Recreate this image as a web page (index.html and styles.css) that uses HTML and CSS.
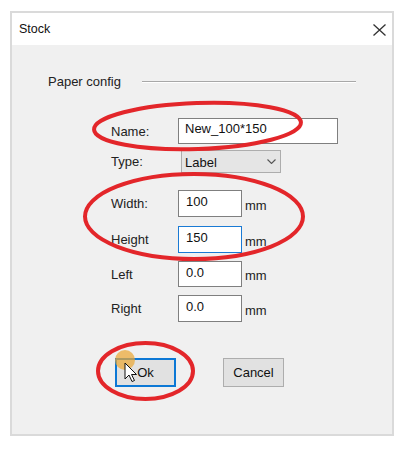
FILE: index.html
```html
<!DOCTYPE html>
<html>
<head>
<meta charset="utf-8">
<link rel="stylesheet" href="styles.css">
</head>
<body>
<div class="page">
  <div class="dialog">
    <div class="titlebar">
      <span class="title">Stock</span>
      <svg class="close" width="13" height="12" viewBox="0 0 13 12"><path d="M0.5 0.5 L12.5 11.5 M12.5 0.5 L0.5 11.5" stroke="#333" stroke-width="1.3" fill="none"/></svg>
    </div>
    <div class="content">
      <div class="group-head">
        <span class="group-title">Paper config</span>
        <span class="group-line"></span>
      </div>
      <div class="form">
        <div class="row row-name">
          <span class="label">Name:</span>
          <span class="field field-name">New_100*150</span>
        </div>
        <div class="row row-type">
          <span class="label">Type:</span>
          <span class="select"><span>Label</span>
            <svg width="9" height="5" viewBox="0 0 9 5"><path d="M0.5 0.5 L4.5 4.5 L8.5 0.5" stroke="#555" stroke-width="1.1" fill="none"/></svg>
          </span>
        </div>
        <div class="row row-width">
          <span class="label">Width:</span>
          <span class="field field-num">100</span>
          <span class="unit">mm</span>
        </div>
        <div class="row row-height">
          <span class="label">Height</span>
          <span class="field field-num field-focus">150</span>
          <span class="unit">mm</span>
        </div>
        <div class="row row-left">
          <span class="label">Left</span>
          <span class="field field-num field-short">0.0</span>
          <span class="unit">mm</span>
        </div>
        <div class="row row-right">
          <span class="label">Right</span>
          <span class="field field-num">0.0</span>
          <span class="unit">mm</span>
        </div>
      </div>
      <div class="buttons">
        <span class="btn btn-ok">Ok</span>
        <span class="btn btn-cancel">Cancel</span>
      </div>
    </div>
  </div>
</div>
<svg class="overlay" width="405" height="450" viewBox="0 0 405 450">
  <ellipse cx="197.5" cy="126" rx="103.5" ry="23" transform="rotate(-2 197.5 126)" class="mark"/>
  <ellipse cx="194" cy="216.5" rx="109" ry="42.5" class="mark"/>
  <ellipse cx="145.5" cy="371" rx="47.5" ry="28" class="mark"/>
  <circle cx="125" cy="360" r="10" fill="rgba(236,168,52,0.72)"/>
  <path d="M125 363 L125 379 L129 375 L132 381.5 L134.5 380.5 L131.5 374.5 L136.5 374.5 Z" fill="#fff" stroke="#111" stroke-width="1" stroke-linejoin="round"/>
</svg>
</body>
</html>
```

FILE: styles.css
```css
html, body {
  margin: 0;
  padding: 0;
  background: #ffffff;
}
body {
  font-family: "Liberation Sans", Arial, sans-serif;
  font-size: 13px;
  color: #222;
  position: relative;
  width: 405px;
  height: 450px;
  overflow: hidden;
}
.page {
  padding: 11px 0 0 10px;
}
.dialog {
  box-sizing: border-box;
  width: 384px;
  height: 425px;
  border: 2px solid #dadada;
  background: #f0f0f0;
  display: flex;
  flex-direction: column;
}
.titlebar {
  height: 32px;
  flex: none;
  background: #ffffff;
  display: flex;
  align-items: center;
  justify-content: space-between;
  padding: 0 6px 0 7px;
}
.title {
  font-size: 12.5px;
  color: #111;
  line-height: 15px;
}
.close {
  display: block;
  margin-top: 1px;
}
.content {
  flex: 1;
}
.group-head {
  display: flex;
  align-items: center;
  height: 16px;
  margin: 29px 0 0 36px;
}
.group-title {
  line-height: 16px;
  color: #222;
}
.group-line {
  width: 214px;
  height: 1px;
  background: #a8a8a8;
  border-bottom: 1px solid #ffffff;
  margin-left: 21px;
}
.form {
  margin: 28px 0 0 99px;
}
.row {
  display: flex;
  align-items: center;
}
.label {
  width: 67px;
  flex: none;
  line-height: 15px;
  color: #222;
}
.row-type { margin-top: 6px; }
.row-width { margin-top: 17px; }
.row-height { margin-top: 9px; }
.row-left { margin-top: 8px; }
.row-right { margin-top: 8px; }
.field {
  box-sizing: border-box;
  background: #ffffff;
  border: 1px solid #7f7f7f;
  line-height: 15px;
  color: #111;
  align-self: flex-start;
}
.row-name .label, .row-width .label, .row-height .label, .row-left .label, .row-right .label {
  align-self: center;
}
.field-name {
  width: 160px;
  height: 26px;
  padding: 2px 0 0 6px;
}
.field-num {
  width: 64px;
  height: 27px;
  padding: 3px 0 0 7px;
}
.field-short {
  height: 26px;
}
.field-focus {
  border-color: #1a7ad4;
}
.unit {
  margin-left: 3px;
  padding-top: 3px;
  line-height: 15px;
  color: #222;
}
.select {
  box-sizing: border-box;
  width: 100px;
  height: 23px;
  margin-left: 3px;
  background: #e5e5e5;
  border: 1px solid #adadad;
  display: flex;
  align-items: center;
  justify-content: space-between;
  padding: 1px 4px 0 3px;
  line-height: 15px;
  color: #111;
}
.select svg {
  display: block;
  margin-top: -1px;
}
.buttons {
  display: flex;
  gap: 47px;
  margin: 36px 0 0 103px;
}
.btn {
  box-sizing: border-box;
  width: 61px;
  height: 29px;
  background: #e1e1e1;
  display: flex;
  align-items: center;
  justify-content: center;
  line-height: 15px;
  color: #111;
}
.btn-ok {
  border: 2px solid #0c78d5;
}
.btn-cancel {
  border: 1px solid #adadad;
}
.overlay {
  position: absolute;
  top: 0;
  left: 0;
  pointer-events: none;
}
.mark {
  fill: none;
  stroke: #e3262a;
  stroke-width: 4;
}
```
